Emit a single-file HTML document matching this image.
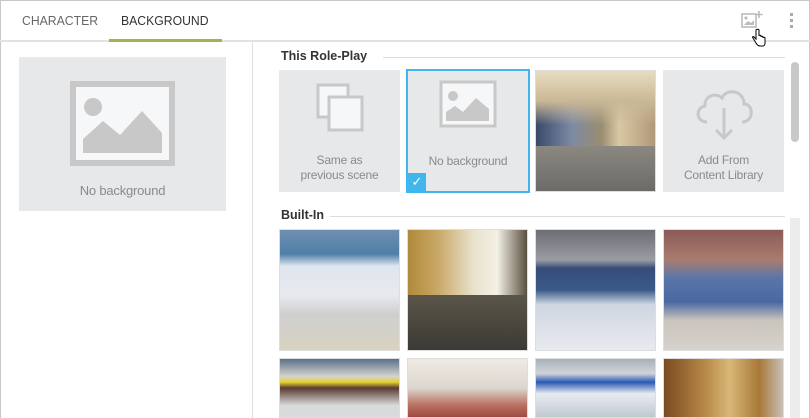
<!DOCTYPE html>
<html style="width:810px;height:418px;overflow:hidden"><head><style>
*{margin:0;padding:0;box-sizing:border-box}
body{width:810px;height:418px;overflow:hidden;background:#fff;font-family:"Liberation Sans",sans-serif;position:relative}
.frame{position:absolute;left:0;top:0;width:810px;height:418px;border:1px solid #c8c8c8;border-bottom:none}
.hdr{position:absolute;left:0;top:0;width:810px;height:42px;border-bottom:2px solid #e2e2e2}
.tab{position:absolute;top:13px;font-size:13px;color:#666;transform:scaleX(0.94);transform-origin:0 0;white-space:nowrap}
.ul{position:absolute;left:109px;top:39px;width:113px;height:3px;background:#a3b150}
.div{position:absolute;left:252px;top:42px;width:1px;height:376px;background:#e0e0e0}
.card{position:absolute;background:#e7e8e9;overflow:hidden}
.lbl{position:absolute;width:100%;text-align:center;color:#8a8a8a;font-size:12px;line-height:15px;letter-spacing:-0.2px}
.sec{position:absolute;left:281px;font-size:12.5px;font-weight:bold;color:#333;white-space:nowrap}
.line{position:absolute;height:1px;background:#ddd}
.t{position:absolute;width:121px;height:122px;border:1px solid #ddd;overflow:hidden}
</style></head><body>
<div class="frame"></div>
<div class="hdr"></div>
<div class="tab" style="left:22px">CHARACTER</div>
<div class="tab" style="left:121px;color:#333">BACKGROUND</div>
<div class="ul"></div>
<svg style="position:absolute;left:740px;top:10px" width="26" height="40" viewBox="0 0 26 40">
<rect x="2" y="4" width="14" height="13" fill="none" stroke="#bbb" stroke-width="1.6"/>
<circle cx="6" cy="8" r="1.6" fill="#bbb"/><path d="M4 15 L8 11 L11 13 L14 10 L14 15Z" fill="#bbb"/>
<path d="M19 1v7M15.5 4.5h7" stroke="#bbb" stroke-width="1.6"/>
<path d="M16 20v9l-2-2c-1-1-2 0-1 1l3 5c1 2 2 3 4 3h3c1 0 2-1 2-3v-5c0-1-2-1-2 0v-1c0-1-2-1-2 0v-1c0-1-2-1-2 0v-6c0-1-3-1-3 0z" fill="#fff" stroke="#000" stroke-width="1"/>
</svg>
<div style="position:absolute;left:790px;top:13px;width:3px;height:3px;background:#aaa;box-shadow:0 6px #aaa,0 12px #aaa"></div>
<div class="div"></div>
<div class="card" style="left:19px;top:57px;width:207px;height:154px">
<svg style="position:absolute;left:51px;top:24px" width="105" height="85" viewBox="0 0 105 85"><rect x="3" y="3" width="99" height="79" fill="#f6f7f9" stroke="#c8c8c8" stroke-width="6"/><circle cx="23" cy="26" r="9" fill="#c8c8c8"/><path d="M13 72 L13 58 L33 40 L50 54 L72 30 L92 52 L92 72Z" fill="#c8c8c8"/></svg>
<div class="lbl" style="top:126px;font-size:13px">No background</div></div>
<div class="sec" style="top:49px">This Role-Play</div>
<div class="line" style="left:383px;top:57px;width:402px"></div>
<div class="card" style="left:279px;top:70px;width:121px;height:122px">
<svg style="position:absolute;left:36px;top:12px" width="50" height="50"><rect x="3" y="3" width="30" height="32" fill="#f6f7f9" stroke="#c8c8c8" stroke-width="3"/><rect x="14" y="15" width="33" height="33" fill="#f6f7f9" stroke="#c8c8c8" stroke-width="3"/></svg>
<div class="lbl" style="top:83px">Same as<br>previous scene</div></div>
<div class="card" style="left:406px;top:69px;width:124px;height:124px;border:2px solid #40b7ec">
<svg style="position:absolute;left:31px;top:9px" width="58" height="48"><rect x="2" y="2" width="54" height="44" fill="#f6f7f9" stroke="#c8c8c8" stroke-width="3"/><circle cx="14" cy="16" r="5" fill="#c8c8c8"/><path d="M7 41 L7 32 L16 26 L24 32 L37 18 L50 29 L50 41Z" fill="#c8c8c8"/></svg>
<div class="lbl" style="top:83px">No background</div>
<div style="position:absolute;left:0;bottom:0;width:18px;height:18px;background:#40b7ec;color:#fff;font-size:13px;text-align:center;line-height:18px">✓</div></div>
<div class="t" style="left:535px;top:70px;background:linear-gradient(180deg,#e8dcc0 0%,#c9b896 25%,transparent 45%),linear-gradient(90deg,#3a4a6a 0%,#7d8aa5 30%,#9a8d70 55%,#d9c8a4 70%,#b09878 100%)"><div style="position:absolute;left:0;right:0;bottom:0;height:45px;background:linear-gradient(#8a8880,#6d6b68)"></div></div>
<div class="card" style="left:663px;top:70px;width:121px;height:122px">
<svg style="position:absolute;left:29px;top:14px" width="64" height="60"><path d="M15 38 C4 38 3 24 13 22 C12 12 24 8 30 14 C34 4 52 6 52 20 C62 20 62 38 50 38" fill="none" stroke="#c8c8c8" stroke-width="3"/><path d="M32 24 V54 M24 46 L32 54 L40 46" fill="none" stroke="#c8c8c8" stroke-width="3"/></svg>
<div class="lbl" style="top:83px">Add From<br>Content Library</div></div>
<div class="sec" style="top:208px">Built-In</div>
<div class="line" style="left:330px;top:216px;width:455px"></div>
<div class="t" style="left:279px;top:229px;background:linear-gradient(180deg,#6f8fb0 0%,#4f7fa8 20%,#dfe6ee 30%,#e7e9ee 55%,#cfcfd0 70%,#d8d2c0 100%)"></div>
<div class="t" style="left:407px;top:229px;background:linear-gradient(90deg,#b08a3a 0%,#c9a867 25%,#e8e2cc 55%,#f3f0e5 75%,#5a5040 100%)"><div style="position:absolute;left:0;right:0;bottom:0;height:55px;background:linear-gradient(#5a5548,#3c3a35)"></div></div>
<div class="t" style="left:535px;top:229px;background:linear-gradient(180deg,#6d6e74 0%,#9a9ca4 25%,#354d78 32%,#3a5a88 50%,#cfd6e2 62%,#e8eaef 100%)"></div>
<div class="t" style="left:663px;top:229px;background:linear-gradient(180deg,#8c5a58 0%,#a87c70 25%,#5a76a8 40%,#4a68a0 60%,#c9c4bc 75%,#d6d2cc 100%)"></div>
<div class="t" style="left:279px;top:358px;height:60px;background:linear-gradient(180deg,#5a6f8a 0%,#d6d4cc 30%,#e2d030 40%,#5a3a30 50%,#d8dadc 80%)"></div>
<div class="t" style="left:407px;top:358px;height:60px;background:linear-gradient(180deg,#efeae4 0%,#dcd6cf 50%,#b87060 80%,#a04a40 100%)"></div>
<div class="t" style="left:535px;top:358px;height:60px;background:linear-gradient(180deg,#a8b0b8 0%,#d0d4d8 25%,#2b58b5 40%,#e8ecf0 60%,#c0c8d0 100%)"></div>
<div class="t" style="left:663px;top:358px;height:60px;background:linear-gradient(90deg,#7a4a20 0%,#b88a48 35%,#d8b878 55%,#a87838 80%,#c8c0b8 100%)"></div>
<div style="position:absolute;left:790px;top:218px;width:10px;height:200px;background:#ececec"></div>
<div style="position:absolute;left:791px;top:62px;width:8px;height:80px;background:#c8c8c8;border-radius:4px"></div>
</body></html>
